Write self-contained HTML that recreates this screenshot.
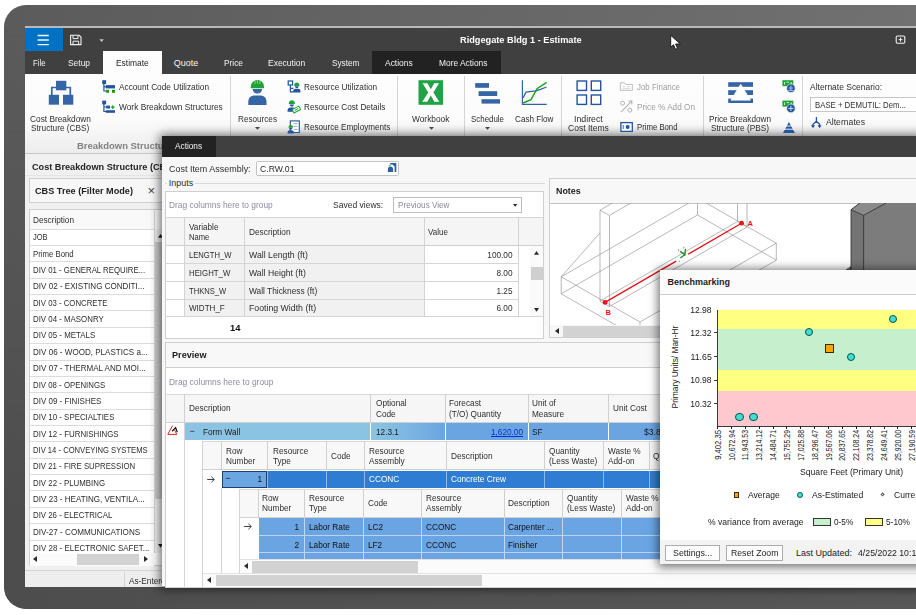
<!DOCTYPE html>
<html lang="en"><head><meta charset="utf-8"><title>Ridgegate Bldg 1 - Estimate</title>
<style>
html,body{margin:0;padding:0;background:#fff}
#root{position:relative;width:916px;height:615px;overflow:hidden;background:#fff;font-family:"Liberation Sans",sans-serif}
#root div,#root svg{position:absolute}
.t{position:absolute;white-space:nowrap;font-family:"Liberation Sans",sans-serif}
</style></head><body><div id="root">
<div style="left:4px;top:5px;width:940px;height:604px;border-radius:22px;background:linear-gradient(100deg,#5b5b5b 0%,#747474 100%)"></div><div style="left:4px;top:5px;width:940px;height:604px;border-radius:22px;background:linear-gradient(90deg,#4d4d4d 0%,#585858 100%);-webkit-mask-image:linear-gradient(180deg,rgba(0,0,0,0) 4%,#000 85%);mask-image:linear-gradient(180deg,rgba(0,0,0,0) 4%,#000 85%)"></div><div style="left:25px;top:26px;width:891px;height:561px;background:#f0f0f0;"></div><div style="left:25px;top:26px;width:891px;height:2px;background:#b9b9b9;"></div><div style="left:25px;top:28px;width:891px;height:46.3px;background:#404040;"></div><div style="left:25px;top:28px;width:37.7px;height:23.4px;background:#0072c6;"></div><div style="left:372px;top:51.3px;width:129px;height:23px;background:#222222;"></div><div style="left:103px;top:51.3px;width:59px;height:24px;background:#fdfdfd;"></div><div style="left:25px;top:74.3px;width:891px;height:79.7px;background:linear-gradient(180deg,#fdfdfd 0%,#fcfcfc 55%,#ececec 100%);"></div><div style="left:25px;top:153px;width:891px;height:1px;background:#c8c8c8;"></div><div style="left:230px;top:76px;width:1px;height:60px;background:#d4d4d4;"></div><div style="left:397px;top:76px;width:1px;height:60px;background:#d4d4d4;"></div><div style="left:464px;top:76px;width:1px;height:60px;background:#d4d4d4;"></div><div style="left:561px;top:76px;width:1px;height:60px;background:#d4d4d4;"></div><div style="left:703px;top:76px;width:1px;height:60px;background:#d4d4d4;"></div><div style="left:802px;top:76px;width:1px;height:60px;background:#d4d4d4;"></div><div style="left:25px;top:154px;width:140px;height:433px;background:#f0f0f0;"></div><div style="left:25px;top:175px;width:140px;height:1px;background:#e4e4e4;"></div><span class="t" style="top:34.25px;font-size:9px;line-height:12px;color:#ffffff;font-weight:700;left:460.4px;transform-origin:0 50%;transform:scaleX(1.0216);">Ridgegate Bldg 1 - Estimate</span><span class="t" style="top:57.25px;font-size:9px;line-height:12px;color:#f4f4f4;left:32.5px;transform-origin:0 50%;transform:scaleX(0.8611);">File</span><span class="t" style="top:57.25px;font-size:9px;line-height:12px;color:#f4f4f4;left:67.7px;transform-origin:0 50%;transform:scaleX(0.9349);">Setup</span><span class="t" style="top:57.25px;font-size:9px;line-height:12px;color:#f4f4f4;left:173.8px;transform-origin:0 50%;">Quote</span><span class="t" style="top:57.25px;font-size:9px;line-height:12px;color:#f4f4f4;left:223.5px;transform-origin:0 50%;transform:scaleX(0.9261);">Price</span><span class="t" style="top:57.25px;font-size:9px;line-height:12px;color:#f4f4f4;left:268.2px;transform-origin:0 50%;transform:scaleX(0.9410);">Execution</span><span class="t" style="top:57.25px;font-size:9px;line-height:12px;color:#f4f4f4;left:331.5px;transform-origin:0 50%;transform:scaleX(0.9162);">System</span><span class="t" style="top:57.25px;font-size:9px;line-height:12px;color:#f4f4f4;left:385.3px;transform-origin:0 50%;transform:scaleX(0.9385);">Actions</span><span class="t" style="top:57.25px;font-size:9px;line-height:12px;color:#f4f4f4;left:438.6px;transform-origin:0 50%;transform:scaleX(0.9302);">More Actions</span><span class="t" style="top:57.25px;font-size:9px;line-height:12px;color:#1e1e1e;left:115.5px;transform-origin:0 50%;transform:scaleX(0.9339);">Estimate</span><span class="t" style="top:113.25px;font-size:9px;line-height:12px;color:#2e2e2e;left:30px;transform-origin:0 50%;transform:scaleX(0.9236);">Cost Breakdown</span><span class="t" style="top:122.25px;font-size:9px;line-height:12px;color:#2e2e2e;left:30.8px;transform-origin:0 50%;transform:scaleX(0.9179);">Structure (CBS)</span><span class="t" style="top:81.25px;font-size:9px;line-height:12px;color:#2e2e2e;left:118.5px;transform-origin:0 50%;transform:scaleX(0.9178);">Account Code Utilization</span><span class="t" style="top:101.25px;font-size:9px;line-height:12px;color:#2e2e2e;left:118.5px;transform-origin:0 50%;transform:scaleX(0.9277);">Work Breakdown Structures</span><span class="t" style="top:140.25px;font-size:9px;line-height:12px;color:#828282;font-weight:700;left:77.3px;transform-origin:0 50%;transform:scaleX(1.0500);">Breakdown Structures</span><span class="t" style="top:113.25px;font-size:9px;line-height:12px;color:#2e2e2e;left:237.5px;transform-origin:0 50%;transform:scaleX(0.9063);">Resources</span><span class="t" style="top:81.25px;font-size:9px;line-height:12px;color:#2e2e2e;left:303.6px;transform-origin:0 50%;transform:scaleX(0.9145);">Resource Utilization</span><span class="t" style="top:101.25px;font-size:9px;line-height:12px;color:#2e2e2e;left:303.6px;transform-origin:0 50%;transform:scaleX(0.9090);">Resource Cost Details</span><span class="t" style="top:121.25px;font-size:9px;line-height:12px;color:#2e2e2e;left:303.6px;transform-origin:0 50%;transform:scaleX(0.9043);">Resource Employments</span><span class="t" style="top:113.25px;font-size:9px;line-height:12px;color:#2e2e2e;left:412px;transform-origin:0 50%;transform:scaleX(0.9267);">Workbook</span><span class="t" style="top:113.25px;font-size:9px;line-height:12px;color:#2e2e2e;left:471px;transform-origin:0 50%;transform:scaleX(0.8793);">Schedule</span><span class="t" style="top:113.25px;font-size:9px;line-height:12px;color:#2e2e2e;left:515px;transform-origin:0 50%;transform:scaleX(0.9055);">Cash Flow</span><span class="t" style="top:113.25px;font-size:9px;line-height:12px;color:#2e2e2e;left:574px;transform-origin:0 50%;transform:scaleX(0.9758);">Indirect</span><span class="t" style="top:122.25px;font-size:9px;line-height:12px;color:#2e2e2e;left:568px;transform-origin:0 50%;transform:scaleX(0.9485);">Cost Items</span><span class="t" style="top:81.25px;font-size:9px;line-height:12px;color:#a0a0a0;left:636.5px;transform-origin:0 50%;transform:scaleX(0.8770);">Job Finance</span><span class="t" style="top:101.25px;font-size:9px;line-height:12px;color:#a0a0a0;left:636.5px;transform-origin:0 50%;transform:scaleX(0.9127);">Price % Add On</span><span class="t" style="top:121.25px;font-size:9px;line-height:12px;color:#2e2e2e;left:636.5px;transform-origin:0 50%;transform:scaleX(0.8611);">Prime Bond</span><span class="t" style="top:113.25px;font-size:9px;line-height:12px;color:#2e2e2e;left:709.4px;transform-origin:0 50%;transform:scaleX(0.9111);">Price Breakdown</span><span class="t" style="top:122.25px;font-size:9px;line-height:12px;color:#2e2e2e;left:711px;transform-origin:0 50%;transform:scaleX(0.9202);">Structure (PBS)</span><span class="t" style="top:81.25px;font-size:9px;line-height:12px;color:#2e2e2e;left:809.6px;transform-origin:0 50%;transform:scaleX(0.9406);">Alternate Scenario:</span><div style="left:810px;top:97px;width:120px;height:15px;background:#fff;border:1px solid #c6c6c6;box-sizing:border-box"></div><span class="t" style="top:99.25px;font-size:9px;line-height:12px;color:#2e2e2e;left:815px;transform-origin:0 50%;transform:scaleX(0.8644);">BASE + DEMUTIL: Dem...</span><span class="t" style="top:116.25px;font-size:9px;line-height:12px;color:#2e2e2e;left:826px;transform-origin:0 50%;transform:scaleX(0.9622);">Alternates</span><svg style="left:254.5px;top:126.6px" width="5" height="3" viewBox="0 0 5 3"><path d="M0 0h5L2.5 2.8z" fill="#4a4a4a"/></svg><svg style="left:428.5px;top:126.6px" width="5" height="3" viewBox="0 0 5 3"><path d="M0 0h5L2.5 2.8z" fill="#4a4a4a"/></svg><svg style="left:485.2px;top:126.6px" width="5" height="3" viewBox="0 0 5 3"><path d="M0 0h5L2.5 2.8z" fill="#4a4a4a"/></svg><span class="t" style="top:161.25px;font-size:9px;line-height:12px;color:#222;font-weight:700;left:32px;transform-origin:0 50%;transform:scaleX(1.0160);">Cost Breakdown Structure (CBS)</span><div style="left:29px;top:178.4px;width:160px;height:24.8px;background:#f7f7f7;border:1px solid #d0d0d0;box-sizing:border-box"></div><span class="t" style="top:185.25px;font-size:9px;line-height:12px;color:#222;font-weight:700;left:35.2px;transform-origin:0 50%;transform:scaleX(1.0154);">CBS Tree (Filter Mode)</span><span class="t" style="top:182.25px;font-size:13px;line-height:17px;color:#444;left:147.5px;transform-origin:0 50%;">×</span><div style="left:28.5px;top:209px;width:160px;height:357px;background:#fff;border:1px solid #cfcfcf;box-sizing:border-box"></div><div style="left:29.5px;top:210px;width:124px;height:19px;background:#f9f9f9;"></div><span class="t" style="top:214.25px;font-size:9px;line-height:12px;color:#2e2e2e;left:33.4px;transform-origin:0 50%;transform:scaleX(0.9105);">Description</span><div style="left:29.5px;top:229px;width:124px;height:1px;background:#dcdcdc;"></div><span class="t" style="top:231.25px;font-size:9px;line-height:12px;color:#2e2e2e;left:33.4px;transform-origin:0 50%;transform:scaleX(0.8335);">JOB</span><div style="left:29.5px;top:245px;width:124px;height:1px;background:#dcdcdc;"></div><span class="t" style="top:248.25px;font-size:9px;line-height:12px;color:#2e2e2e;left:33.4px;transform-origin:0 50%;transform:scaleX(0.8633);">Prime Bond</span><div style="left:29.5px;top:261px;width:124px;height:1px;background:#dcdcdc;"></div><span class="t" style="top:264.25px;font-size:9px;line-height:12px;color:#2e2e2e;left:33.4px;transform-origin:0 50%;transform:scaleX(0.8684);">DIV 01 - GENERAL REQUIRE...</span><div style="left:29.5px;top:278px;width:124px;height:1px;background:#dcdcdc;"></div><span class="t" style="top:280.25px;font-size:9px;line-height:12px;color:#2e2e2e;left:33.4px;transform-origin:0 50%;transform:scaleX(0.8954);">DIV 02 - EXISTING CONDITI...</span><div style="left:29.5px;top:294px;width:124px;height:1px;background:#dcdcdc;"></div><span class="t" style="top:297.25px;font-size:9px;line-height:12px;color:#2e2e2e;left:33.4px;transform-origin:0 50%;transform:scaleX(0.8650);">DIV 03 - CONCRETE</span><div style="left:29.5px;top:310px;width:124px;height:1px;background:#dcdcdc;"></div><span class="t" style="top:313.25px;font-size:9px;line-height:12px;color:#2e2e2e;left:33.4px;transform-origin:0 50%;transform:scaleX(0.8744);">DIV 04 - MASONRY</span><div style="left:29.5px;top:327px;width:124px;height:1px;background:#dcdcdc;"></div><span class="t" style="top:329.25px;font-size:9px;line-height:12px;color:#2e2e2e;left:33.4px;transform-origin:0 50%;transform:scaleX(0.8778);">DIV 05 - METALS</span><div style="left:29.5px;top:343px;width:124px;height:1px;background:#dcdcdc;"></div><span class="t" style="top:346.25px;font-size:9px;line-height:12px;color:#2e2e2e;left:33.4px;transform-origin:0 50%;transform:scaleX(0.8951);">DIV 06 - WOOD, PLASTICS a...</span><div style="left:29.5px;top:360px;width:124px;height:1px;background:#dcdcdc;"></div><span class="t" style="top:362.25px;font-size:9px;line-height:12px;color:#2e2e2e;left:33.4px;transform-origin:0 50%;transform:scaleX(0.8942);">DIV 07 - THERMAL AND MOI...</span><div style="left:29.5px;top:376px;width:124px;height:1px;background:#dcdcdc;"></div><span class="t" style="top:379.25px;font-size:9px;line-height:12px;color:#2e2e2e;left:33.4px;transform-origin:0 50%;transform:scaleX(0.8696);">DIV 08 - OPENINGS</span><div style="left:29.5px;top:392px;width:124px;height:1px;background:#dcdcdc;"></div><span class="t" style="top:395.25px;font-size:9px;line-height:12px;color:#2e2e2e;left:33.4px;transform-origin:0 50%;transform:scaleX(0.8867);">DIV 09 - FINISHES</span><div style="left:29.5px;top:409px;width:124px;height:1px;background:#dcdcdc;"></div><span class="t" style="top:411.25px;font-size:9px;line-height:12px;color:#2e2e2e;left:33.4px;transform-origin:0 50%;transform:scaleX(0.8764);">DIV 10 - SPECIALTIES</span><div style="left:29.5px;top:425px;width:124px;height:1px;background:#dcdcdc;"></div><span class="t" style="top:428.25px;font-size:9px;line-height:12px;color:#2e2e2e;left:33.4px;transform-origin:0 50%;transform:scaleX(0.8778);">DIV 12 - FURNISHINGS</span><div style="left:29.5px;top:441px;width:124px;height:1px;background:#dcdcdc;"></div><span class="t" style="top:444.25px;font-size:9px;line-height:12px;color:#2e2e2e;left:33.4px;transform-origin:0 50%;transform:scaleX(0.8487);">DIV 14 - CONVEYING SYSTEMS</span><div style="left:29.5px;top:458px;width:124px;height:1px;background:#dcdcdc;"></div><span class="t" style="top:460.25px;font-size:9px;line-height:12px;color:#2e2e2e;left:33.4px;transform-origin:0 50%;transform:scaleX(0.8696);">DIV 21 - FIRE SUPRESSION</span><div style="left:29.5px;top:474px;width:124px;height:1px;background:#dcdcdc;"></div><span class="t" style="top:477.25px;font-size:9px;line-height:12px;color:#2e2e2e;left:33.4px;transform-origin:0 50%;transform:scaleX(0.8724);">DIV 22 - PLUMBING</span><div style="left:29.5px;top:490px;width:124px;height:1px;background:#dcdcdc;"></div><span class="t" style="top:493.25px;font-size:9px;line-height:12px;color:#2e2e2e;left:33.4px;transform-origin:0 50%;transform:scaleX(0.8953);">DIV 23 - HEATING, VENTILA...</span><div style="left:29.5px;top:507px;width:124px;height:1px;background:#dcdcdc;"></div><span class="t" style="top:509.25px;font-size:9px;line-height:12px;color:#2e2e2e;left:33.4px;transform-origin:0 50%;transform:scaleX(0.8711);">DIV 26 - ELECTRICAL</span><div style="left:29.5px;top:523px;width:124px;height:1px;background:#dcdcdc;"></div><span class="t" style="top:526.25px;font-size:9px;line-height:12px;color:#2e2e2e;left:33.4px;transform-origin:0 50%;transform:scaleX(0.9020);">DIV-27 - COMMUNICATIONS</span><div style="left:29.5px;top:540px;width:124px;height:1px;background:#dcdcdc;"></div><span class="t" style="top:542.25px;font-size:9px;line-height:12px;color:#2e2e2e;left:33.4px;transform-origin:0 50%;transform:scaleX(0.8842);">DIV 28 - ELECTRONIC SAFET...</span><div style="left:153.5px;top:210px;width:1px;height:343px;background:#d6d6d6;"></div><div style="left:154.5px;top:229px;width:8px;height:324px;background:#f4f4f4;"></div><div style="left:154.5px;top:242px;width:8px;height:256.5px;background:#cfcfcf;"></div><svg style="left:157.6px;top:234px" width="5" height="4" viewBox="0 0 5 4"><path d="M0 3.8h5L2.5 0z" fill="#222"/></svg><svg style="left:157.6px;top:544px" width="5" height="4" viewBox="0 0 5 4"><path d="M0 0h5L2.5 3.8z" fill="#222"/></svg><div style="left:29.5px;top:553px;width:124px;height:13px;background:#fbfbfb;"></div><div style="left:76.7px;top:554px;width:62px;height:11px;background:#d2d2d2;"></div><svg style="left:33px;top:556px" width="4" height="6" viewBox="0 0 4 6"><path d="M4 0v6L0 3z" fill="#2a2a2a"/></svg><svg style="left:144px;top:556px" width="4" height="6" viewBox="0 0 4 6"><path d="M0 0v6L4 3z" fill="#2a2a2a"/></svg><div style="left:25px;top:570px;width:140px;height:17px;background:#eeeeee;"></div><div style="left:25px;top:570px;width:140px;height:1px;background:#d4d4d4;"></div><div style="left:124px;top:572px;width:1px;height:15px;background:#d4d4d4;"></div><span class="t" style="top:575.25px;font-size:9px;line-height:12px;color:#2e2e2e;left:128.5px;transform-origin:0 50%;transform:scaleX(0.9150);">As-Entered</span><div style="left:162px;top:136px;width:760px;height:450px;background:#f4f4f4;box-shadow:0 1px 10px 2px rgba(0,0,0,.6)"></div><div style="left:162px;top:136px;width:760px;height:21px;background:#404040;"></div><div style="left:162px;top:136px;width:54px;height:21px;background:#222222;"></div><span class="t" style="top:140.25px;font-size:9px;line-height:12px;color:#f4f4f4;left:175.3px;transform-origin:0 50%;transform:scaleX(0.9182);">Actions</span><div style="left:162px;top:157px;width:760px;height:429px;background:#f7f7f7;"></div><span class="t" style="top:163.25px;font-size:9px;line-height:12px;color:#2e2e2e;left:168.8px;transform-origin:0 50%;transform:scaleX(0.9947);">Cost Item Assembly:</span><div style="left:256px;top:160.7px;width:143px;height:15.2px;background:#fff;border:1px solid #c4c4c4;border-radius:1.5px;box-sizing:border-box"></div><span class="t" style="top:163.25px;font-size:9px;line-height:12px;color:#2e2e2e;left:260px;transform-origin:0 50%;transform:scaleX(0.9621);">C.RW.01</span><div style="left:165px;top:183px;width:380px;height:1px;background:#d8d8d8;"></div><div style="left:167px;top:178px;width:28px;height:10px;background:#f7f7f7;"></div><span class="t" style="top:177.25px;font-size:9px;line-height:12px;color:#2e2e2e;left:168.8px;transform-origin:0 50%;">Inputs</span><div style="left:165px;top:191px;width:378.5px;height:148px;background:#fff;border:1px solid #cfcfcf;box-sizing:border-box"></div><span class="t" style="top:199.25px;font-size:9px;line-height:12px;color:#8d8da0;left:168.8px;transform-origin:0 50%;transform:scaleX(0.9295);">Drag columns here to group</span><span class="t" style="top:199.25px;font-size:9px;line-height:12px;color:#2e2e2e;left:332.6px;transform-origin:0 50%;transform:scaleX(0.9466);">Saved views:</span><div style="left:393px;top:197px;width:129px;height:16px;background:#fff;border:1px solid #bdbdbd;box-sizing:border-box"></div><span class="t" style="top:199.25px;font-size:9px;line-height:12px;color:#8a8a96;left:397.5px;transform-origin:0 50%;transform:scaleX(0.9055);">Previous View</span><svg style="left:513.4px;top:204px" width="4.4" height="3" viewBox="0 0 4.4 3"><path d="M0 0h4.4L2.2 2.8z" fill="#2a2a2a"/></svg><div style="left:166px;top:217px;width:377px;height:29px;background:#f5f5f5;"></div><div style="left:166px;top:217px;width:377px;height:1px;background:#d6d6d6;"></div><div style="left:166px;top:245px;width:377px;height:1px;background:#d0d0d0;"></div><div style="left:184px;top:217px;width:1px;height:29px;background:#d4d4d4;"></div><div style="left:244px;top:217px;width:1px;height:29px;background:#d4d4d4;"></div><div style="left:423.5px;top:217px;width:1px;height:29px;background:#d4d4d4;"></div><div style="left:517.5px;top:217px;width:1px;height:29px;background:#d4d4d4;"></div><span class="t" style="top:221.25px;font-size:9px;line-height:12px;color:#2e2e2e;left:189.3px;transform-origin:0 50%;transform:scaleX(0.9116);">Variable</span><span class="t" style="top:231.25px;font-size:9px;line-height:12px;color:#2e2e2e;left:189.3px;transform-origin:0 50%;transform:scaleX(0.8453);">Name</span><span class="t" style="top:226.25px;font-size:9px;line-height:12px;color:#2e2e2e;left:248.9px;transform-origin:0 50%;transform:scaleX(0.9216);">Description</span><span class="t" style="top:226.25px;font-size:9px;line-height:12px;color:#2e2e2e;left:428.4px;transform-origin:0 50%;transform:scaleX(0.8945);">Value</span><div style="left:185px;top:246px;width:238.5px;height:70px;background:#f1f1f1;"></div><div style="left:166px;top:263px;width:352px;height:1px;background:#d6d6d6;"></div><span class="t" style="top:249.25px;font-size:9px;line-height:12px;color:#2e2e2e;left:189px;transform-origin:0 50%;transform:scaleX(0.8477);">LENGTH_W</span><span class="t" style="top:249.25px;font-size:9px;line-height:12px;color:#2e2e2e;left:249px;transform-origin:0 50%;transform:scaleX(0.9686);">Wall Length (ft)</span><span class="t" style="top:249.25px;font-size:9px;line-height:12px;color:#2e2e2e;right:403.4px;transform-origin:100% 50%;transform:scaleX(0.9150);">100.00</span><div style="left:166px;top:281px;width:352px;height:1px;background:#d6d6d6;"></div><span class="t" style="top:267.25px;font-size:9px;line-height:12px;color:#2e2e2e;left:189px;transform-origin:0 50%;transform:scaleX(0.8692);">HEIGHT_W</span><span class="t" style="top:267.25px;font-size:9px;line-height:12px;color:#2e2e2e;left:249px;transform-origin:0 50%;transform:scaleX(0.9614);">Wall Height (ft)</span><span class="t" style="top:267.25px;font-size:9px;line-height:12px;color:#2e2e2e;right:403.4px;transform-origin:100% 50%;transform:scaleX(0.9150);">8.00</span><div style="left:166px;top:299px;width:352px;height:1px;background:#d6d6d6;"></div><span class="t" style="top:285.25px;font-size:9px;line-height:12px;color:#2e2e2e;left:189px;transform-origin:0 50%;transform:scaleX(0.8452);">THKNS_W</span><span class="t" style="top:285.25px;font-size:9px;line-height:12px;color:#2e2e2e;left:249px;transform-origin:0 50%;transform:scaleX(0.9277);">Wall Thickness (ft)</span><span class="t" style="top:285.25px;font-size:9px;line-height:12px;color:#2e2e2e;right:403.4px;transform-origin:100% 50%;transform:scaleX(0.9150);">1.25</span><div style="left:166px;top:316px;width:377px;height:1px;background:#d6d6d6;"></div><span class="t" style="top:302.25px;font-size:9px;line-height:12px;color:#2e2e2e;left:189px;transform-origin:0 50%;transform:scaleX(0.8950);">WIDTH_F</span><span class="t" style="top:302.25px;font-size:9px;line-height:12px;color:#2e2e2e;left:249px;transform-origin:0 50%;transform:scaleX(0.9720);">Footing Width (ft)</span><span class="t" style="top:302.25px;font-size:9px;line-height:12px;color:#2e2e2e;right:403.4px;transform-origin:100% 50%;transform:scaleX(0.9150);">6.00</span><div style="left:184px;top:246px;width:1px;height:70px;background:#d4d4d4;"></div><div style="left:244px;top:246px;width:1px;height:70px;background:#d4d4d4;"></div><div style="left:423.5px;top:246px;width:1px;height:70px;background:#d4d4d4;"></div><div style="left:517.5px;top:246px;width:1px;height:70px;background:#d4d4d4;"></div><div style="left:530px;top:246px;width:13px;height:70px;background:#fafafa;"></div><div style="left:530.5px;top:266.5px;width:12.5px;height:13px;background:#cfcfcf;"></div><svg style="left:534.4px;top:251.4px" width="5" height="4" viewBox="0 0 5 4"><path d="M0 3.8h5L2.5 0z" fill="#2a2a2a"/></svg><svg style="left:534.4px;top:307.6px" width="5" height="4" viewBox="0 0 5 4"><path d="M0 0h5L2.5 3.8z" fill="#2a2a2a"/></svg><span class="t" style="top:322.25px;font-size:9px;line-height:12px;color:#111;font-weight:700;left:229.9px;transform-origin:0 50%;transform:scaleX(1.0384);">14</span><div style="left:165px;top:342px;width:760px;height:246px;background:#fff;border:1px solid #cfcfcf;box-sizing:border-box"></div><div style="left:166px;top:343px;width:750px;height:24px;background:#f8f8f8;"></div><div style="left:166px;top:367px;width:750px;height:1px;background:#cfcfcf;"></div><span class="t" style="top:349.25px;font-size:9px;line-height:12px;color:#1c1c1c;font-weight:700;left:172px;transform-origin:0 50%;transform:scaleX(1.0138);">Preview</span><span class="t" style="top:376.25px;font-size:9px;line-height:12px;color:#8d8da0;left:168.5px;transform-origin:0 50%;transform:scaleX(0.9367);">Drag columns here to group</span><div style="left:166px;top:394px;width:750px;height:28px;background:#f6f6f6;"></div><div style="left:166px;top:394px;width:750px;height:1px;background:#d8d8d8;"></div><div style="left:166px;top:422px;width:750px;height:1px;background:#d0d0d0;"></div><div style="left:184px;top:394px;width:1px;height:28px;background:#d0d0d0;"></div><div style="left:370px;top:394px;width:1px;height:28px;background:#d0d0d0;"></div><div style="left:445px;top:394px;width:1px;height:28px;background:#d0d0d0;"></div><div style="left:528px;top:394px;width:1px;height:28px;background:#d0d0d0;"></div><div style="left:608px;top:394px;width:1px;height:28px;background:#d0d0d0;"></div><span class="t" style="top:402.25px;font-size:9px;line-height:12px;color:#2e2e2e;left:189.2px;transform-origin:0 50%;transform:scaleX(0.9216);">Description</span><span class="t" style="top:397.25px;font-size:9px;line-height:12px;color:#2e2e2e;left:375.7px;transform-origin:0 50%;transform:scaleX(0.9150);">Optional</span><span class="t" style="top:408.25px;font-size:9px;line-height:12px;color:#2e2e2e;left:375.7px;transform-origin:0 50%;transform:scaleX(0.9150);">Code</span><span class="t" style="top:397.25px;font-size:9px;line-height:12px;color:#2e2e2e;left:449px;transform-origin:0 50%;transform:scaleX(0.9150);">Forecast</span><span class="t" style="top:408.25px;font-size:9px;line-height:12px;color:#2e2e2e;left:449px;transform-origin:0 50%;transform:scaleX(0.9150);">(T/O) Quantity</span><span class="t" style="top:397.25px;font-size:9px;line-height:12px;color:#2e2e2e;left:532.3px;transform-origin:0 50%;transform:scaleX(0.9150);">Unit of</span><span class="t" style="top:408.25px;font-size:9px;line-height:12px;color:#2e2e2e;left:532.3px;transform-origin:0 50%;transform:scaleX(0.9150);">Measure</span><span class="t" style="top:402.25px;font-size:9px;line-height:12px;color:#2e2e2e;left:612.8px;transform-origin:0 50%;transform:scaleX(0.9150);">Unit Cost</span><div style="left:185px;top:423px;width:185px;height:17px;background:#8ac4e2;"></div><div style="left:371px;top:423px;width:74px;height:17px;background:linear-gradient(90deg,#8ac4e2 0%,#7fb8e2 45%,#6aa5e2 100%);"></div><div style="left:446px;top:423px;width:82px;height:17px;background:#6aa5e2;"></div><div style="left:529px;top:423px;width:79px;height:17px;background:#6aa5e2;"></div><div style="left:609px;top:423px;width:310px;height:17px;background:#6aa5e2;"></div><div style="left:184px;top:423px;width:1px;height:164px;background:#d4d4d4;"></div><span class="t" style="top:425.25px;font-size:9px;line-height:12px;color:#222;left:189.6px;transform-origin:0 50%;">−</span><span class="t" style="top:426.25px;font-size:9px;line-height:12px;color:#1a1a1a;left:202.6px;transform-origin:0 50%;transform:scaleX(0.9150);">Form Wall</span><span class="t" style="top:426.25px;font-size:9px;line-height:12px;color:#1a1a1a;left:376.3px;transform-origin:0 50%;transform:scaleX(0.9150);">12.3.1</span><span class="t" style="top:426.25px;font-size:9px;line-height:12px;color:#0a2fd0;right:392.6px;transform-origin:100% 50%;transform:scaleX(0.9150);text-decoration:underline;">1,620.00</span><span class="t" style="top:426.25px;font-size:9px;line-height:12px;color:#1a1a1a;left:532.3px;transform-origin:0 50%;transform:scaleX(0.9150);">SF</span><span class="t" style="top:426.25px;font-size:9px;line-height:12px;color:#1a1a1a;left:644.3px;transform-origin:0 50%;transform:scaleX(0.9500);">$3.85</span><svg style="left:166px;top:424px" width="13" height="12" viewBox="166 424 13 12"><path d="M172.5 425.6L167.8 434.4H176.8L174.6 430.2" fill="none" stroke="#e0242c" stroke-width="1"/><path d="M172.2 431.2L175.6 427.6L176.6 430.4L177.4 432.2" fill="none" stroke="#1a1a1a" stroke-width="1.3"/></svg><div style="left:202px;top:441px;width:1px;height:146px;background:#d4d4d4;"></div><div style="left:203px;top:441px;width:716px;height:29px;background:#f8f8f8;"></div><div style="left:203px;top:441px;width:716px;height:1px;background:#d8d8d8;"></div><div style="left:203px;top:469px;width:716px;height:1px;background:#d0d0d0;"></div><div style="left:221px;top:441px;width:1px;height:29px;background:#d0d0d0;"></div><div style="left:267px;top:441px;width:1px;height:29px;background:#d0d0d0;"></div><div style="left:326px;top:441px;width:1px;height:29px;background:#d0d0d0;"></div><div style="left:363.5px;top:441px;width:1px;height:29px;background:#d0d0d0;"></div><div style="left:445.5px;top:441px;width:1px;height:29px;background:#d0d0d0;"></div><div style="left:544px;top:441px;width:1px;height:29px;background:#d0d0d0;"></div><div style="left:603px;top:441px;width:1px;height:29px;background:#d0d0d0;"></div><div style="left:648.5px;top:441px;width:1px;height:29px;background:#d0d0d0;"></div><span class="t" style="top:445.25px;font-size:9px;line-height:12px;color:#2e2e2e;left:225.9px;transform-origin:0 50%;transform:scaleX(0.9150);">Row</span><span class="t" style="top:455.25px;font-size:9px;line-height:12px;color:#2e2e2e;left:225.9px;transform-origin:0 50%;transform:scaleX(0.9150);">Number</span><span class="t" style="top:445.25px;font-size:9px;line-height:12px;color:#2e2e2e;left:273px;transform-origin:0 50%;transform:scaleX(0.9150);">Resource</span><span class="t" style="top:455.25px;font-size:9px;line-height:12px;color:#2e2e2e;left:273px;transform-origin:0 50%;transform:scaleX(0.9150);">Type</span><span class="t" style="top:450.25px;font-size:9px;line-height:12px;color:#2e2e2e;left:331px;transform-origin:0 50%;transform:scaleX(0.9150);">Code</span><span class="t" style="top:445.25px;font-size:9px;line-height:12px;color:#2e2e2e;left:368.6px;transform-origin:0 50%;transform:scaleX(0.9150);">Resource</span><span class="t" style="top:455.25px;font-size:9px;line-height:12px;color:#2e2e2e;left:368.6px;transform-origin:0 50%;transform:scaleX(0.9150);">Assembly</span><span class="t" style="top:450.25px;font-size:9px;line-height:12px;color:#2e2e2e;left:450.8px;transform-origin:0 50%;transform:scaleX(0.9216);">Description</span><span class="t" style="top:445.25px;font-size:9px;line-height:12px;color:#2e2e2e;left:549px;transform-origin:0 50%;transform:scaleX(0.9150);">Quantity</span><span class="t" style="top:455.25px;font-size:9px;line-height:12px;color:#2e2e2e;left:549px;transform-origin:0 50%;transform:scaleX(0.9150);">(Less Waste)</span><span class="t" style="top:445.25px;font-size:9px;line-height:12px;color:#2e2e2e;left:608px;transform-origin:0 50%;transform:scaleX(0.9150);">Waste %</span><span class="t" style="top:455.25px;font-size:9px;line-height:12px;color:#2e2e2e;left:608px;transform-origin:0 50%;transform:scaleX(0.9150);">Add-on</span><span class="t" style="top:450.25px;font-size:9px;line-height:12px;color:#2e2e2e;left:653px;transform-origin:0 50%;transform:scaleX(0.9150);">Qty</span><div style="left:222px;top:471px;width:697px;height:17px;background:#2f7dd3;"></div><div style="left:267px;top:471px;width:1px;height:17px;background:#8fb8e6;"></div><div style="left:326px;top:471px;width:1px;height:17px;background:#8fb8e6;"></div><div style="left:363.5px;top:471px;width:1px;height:17px;background:#8fb8e6;"></div><div style="left:445.5px;top:471px;width:1px;height:17px;background:#8fb8e6;"></div><div style="left:544px;top:471px;width:1px;height:17px;background:#8fb8e6;"></div><div style="left:603px;top:471px;width:1px;height:17px;background:#8fb8e6;"></div><div style="left:648.5px;top:471px;width:1px;height:17px;background:#8fb8e6;"></div><div style="left:222px;top:471px;width:45px;height:17px;background:#6ba6e3;border:1px solid #1b3f6e;box-sizing:border-box"></div><svg style="left:207.2px;top:475.7px" width="8" height="7" viewBox="0 0 8 7"><path d="M0.2 3.5H7.2M4.4 0.8L7.3 3.5L4.4 6.2" fill="none" stroke="#2a2a2a" stroke-width="0.9"/></svg><span class="t" style="top:472.25px;font-size:9px;line-height:12px;color:#111;left:225.2px;transform-origin:0 50%;">−</span><span class="t" style="top:473.25px;font-size:9px;line-height:12px;color:#111;right:653.7px;transform-origin:100% 50%;transform:scaleX(0.9150);">1</span><span class="t" style="top:473.25px;font-size:9px;line-height:12px;color:#ffffff;left:368.6px;transform-origin:0 50%;transform:scaleX(0.9150);">CCONC</span><span class="t" style="top:473.25px;font-size:9px;line-height:12px;color:#ffffff;left:450.8px;transform-origin:0 50%;transform:scaleX(0.9150);">Concrete Crew</span><div style="left:221px;top:488px;width:1px;height:98px;background:#d4d4d4;"></div><div style="left:238.6px;top:489px;width:1px;height:84px;background:#d4d4d4;"></div><div style="left:239.6px;top:489px;width:680px;height:28px;background:#f8f8f8;"></div><div style="left:239.6px;top:489px;width:680px;height:1px;background:#d8d8d8;"></div><div style="left:239.6px;top:517px;width:680px;height:1px;background:#d0d0d0;"></div><div style="left:258px;top:489px;width:1px;height:28px;background:#d0d0d0;"></div><div style="left:304px;top:489px;width:1px;height:28px;background:#d0d0d0;"></div><div style="left:362.5px;top:489px;width:1px;height:28px;background:#d0d0d0;"></div><div style="left:420.7px;top:489px;width:1px;height:28px;background:#d0d0d0;"></div><div style="left:503.7px;top:489px;width:1px;height:28px;background:#d0d0d0;"></div><div style="left:562px;top:489px;width:1px;height:28px;background:#d0d0d0;"></div><div style="left:621px;top:489px;width:1px;height:28px;background:#d0d0d0;"></div><span class="t" style="top:492.25px;font-size:9px;line-height:12px;color:#2e2e2e;left:262.2px;transform-origin:0 50%;transform:scaleX(0.9150);">Row</span><span class="t" style="top:502.25px;font-size:9px;line-height:12px;color:#2e2e2e;left:262.2px;transform-origin:0 50%;transform:scaleX(0.9150);">Number</span><span class="t" style="top:492.25px;font-size:9px;line-height:12px;color:#2e2e2e;left:309px;transform-origin:0 50%;transform:scaleX(0.9150);">Resource</span><span class="t" style="top:502.25px;font-size:9px;line-height:12px;color:#2e2e2e;left:309px;transform-origin:0 50%;transform:scaleX(0.9150);">Type</span><span class="t" style="top:497.25px;font-size:9px;line-height:12px;color:#2e2e2e;left:367.8px;transform-origin:0 50%;transform:scaleX(0.9150);">Code</span><span class="t" style="top:492.25px;font-size:9px;line-height:12px;color:#2e2e2e;left:425.7px;transform-origin:0 50%;transform:scaleX(0.9150);">Resource</span><span class="t" style="top:502.25px;font-size:9px;line-height:12px;color:#2e2e2e;left:425.7px;transform-origin:0 50%;transform:scaleX(0.9150);">Assembly</span><span class="t" style="top:497.25px;font-size:9px;line-height:12px;color:#2e2e2e;left:508.4px;transform-origin:0 50%;transform:scaleX(0.9216);">Description</span><span class="t" style="top:492.25px;font-size:9px;line-height:12px;color:#2e2e2e;left:567px;transform-origin:0 50%;transform:scaleX(0.9150);">Quantity</span><span class="t" style="top:502.25px;font-size:9px;line-height:12px;color:#2e2e2e;left:567px;transform-origin:0 50%;transform:scaleX(0.9150);">(Less Waste)</span><span class="t" style="top:492.25px;font-size:9px;line-height:12px;color:#2e2e2e;left:626px;transform-origin:0 50%;transform:scaleX(0.9150);">Waste %</span><span class="t" style="top:502.25px;font-size:9px;line-height:12px;color:#2e2e2e;left:626px;transform-origin:0 50%;transform:scaleX(0.9150);">Add-on</span><div style="left:259px;top:518px;width:660px;height:41px;background:#6aa4e3;"></div><div style="left:259px;top:535px;width:660px;height:1px;background:#b9d3f1;"></div><span class="t" style="top:521.25px;font-size:9px;line-height:12px;color:#111;right:617px;transform-origin:100% 50%;transform:scaleX(0.9150);">1</span><span class="t" style="top:521.25px;font-size:9px;line-height:12px;color:#111;left:309px;transform-origin:0 50%;transform:scaleX(0.9150);">Labor Rate</span><span class="t" style="top:521.25px;font-size:9px;line-height:12px;color:#111;left:367.8px;transform-origin:0 50%;transform:scaleX(0.9150);">LC2</span><span class="t" style="top:521.25px;font-size:9px;line-height:12px;color:#111;left:425.7px;transform-origin:0 50%;transform:scaleX(0.9150);">CCONC</span><span class="t" style="top:521.25px;font-size:9px;line-height:12px;color:#111;left:508.4px;transform-origin:0 50%;transform:scaleX(0.9150);">Carpenter ...</span><div style="left:259px;top:552px;width:660px;height:1px;background:#b9d3f1;"></div><span class="t" style="top:539.25px;font-size:9px;line-height:12px;color:#111;right:617px;transform-origin:100% 50%;transform:scaleX(0.9150);">2</span><span class="t" style="top:539.25px;font-size:9px;line-height:12px;color:#111;left:309px;transform-origin:0 50%;transform:scaleX(0.9150);">Labor Rate</span><span class="t" style="top:539.25px;font-size:9px;line-height:12px;color:#111;left:367.8px;transform-origin:0 50%;transform:scaleX(0.9150);">LF2</span><span class="t" style="top:539.25px;font-size:9px;line-height:12px;color:#111;left:425.7px;transform-origin:0 50%;transform:scaleX(0.9150);">CCONC</span><span class="t" style="top:539.25px;font-size:9px;line-height:12px;color:#111;left:508.4px;transform-origin:0 50%;transform:scaleX(0.9150);">Finisher</span><div style="left:304px;top:518px;width:1px;height:41px;background:#c2d8f2;"></div><div style="left:362.5px;top:518px;width:1px;height:41px;background:#c2d8f2;"></div><div style="left:420.7px;top:518px;width:1px;height:41px;background:#c2d8f2;"></div><div style="left:503.7px;top:518px;width:1px;height:41px;background:#c2d8f2;"></div><div style="left:562px;top:518px;width:1px;height:41px;background:#c2d8f2;"></div><div style="left:621px;top:518px;width:1px;height:41px;background:#c2d8f2;"></div><svg style="left:243.6px;top:523.3px" width="8" height="7" viewBox="0 0 8 7"><path d="M0.2 3.5H7.2M4.4 0.8L7.3 3.5L4.4 6.2" fill="none" stroke="#2a2a2a" stroke-width="0.9"/></svg><div style="left:239.6px;top:559px;width:680px;height:14px;background:#fbfbfb;"></div><div style="left:239.6px;top:559px;width:680px;height:1px;background:#e2e2e2;"></div><div style="left:252px;top:561px;width:166px;height:11.5px;background:#d2d2d2;"></div><svg style="left:243.5px;top:563px" width="4" height="6" viewBox="0 0 4 6"><path d="M4 0v6L0 3z" fill="#2a2a2a"/></svg><div style="left:203px;top:573px;width:716px;height:13px;background:#fbfbfb;"></div><div style="left:203px;top:573px;width:716px;height:1px;background:#e2e2e2;"></div><div style="left:216px;top:574.5px;width:266px;height:11.5px;background:#d2d2d2;"></div><svg style="left:207px;top:576.5px" width="4" height="6" viewBox="0 0 4 6"><path d="M4 0v6L0 3z" fill="#2a2a2a"/></svg><div style="left:549px;top:178px;width:380px;height:160px;background:#fff;border:1px solid #cfcfcf;box-sizing:border-box"></div><div style="left:550px;top:179px;width:370px;height:24px;background:#f8f8f8;"></div><div style="left:550px;top:202.5px;width:370px;height:1px;background:#c4c4c4;"></div><span class="t" style="top:185.25px;font-size:9px;line-height:12px;color:#1c1c1c;font-weight:700;left:555.7px;transform-origin:0 50%;transform:scaleX(0.9874);">Notes</span><svg style="left:550px;top:203px" width="366" height="122" viewBox="550 203 366 122"><path d="M561.2 276.8L640.0 322.0 M640.0 322.0L776.3 243.2 M776.3 243.2L697.5 198.0 M697.5 198.0L561.2 276.8 M561.2 293.8L640.0 339.0 M640.0 339.0L776.3 260.2 M776.3 260.2L697.5 215.0 M697.5 215.0L561.2 293.8 M561.2 276.8L561.2 293.8 M640.0 322.0L640.0 339.0 M776.3 243.2L776.3 260.2 M697.5 198.0L697.5 215.0 M600.0 301.0L600.0 210.2 M609.5 306.5L609.5 215.4 M600.0 210.2L609.5 215.4 M600.0 301.0L609.5 306.5 M600.0 301.0L737.5 221.5 M609.5 306.5L747.0 227.0 M600.0 210.2L737.5 130.7 M609.5 215.4L747.0 135.9 M737.5 221.5L737.5 130.7 M747.0 227.0L747.0 135.9 M737.5 221.5L747.0 227.0 M561.2 276.8L600.0 232.9" fill="none" stroke="#9a9a9a" stroke-width="0.7"/><path d="M605.0 302.4L676.2 261.1M688.3 254.1L741.6 223.2" stroke="#e8131b" stroke-width="1.3" fill="none"/><circle cx="741.6" cy="223.2" r="2.4" fill="#e8131b"/><circle cx="605" cy="302.4" r="2.4" fill="#e8131b"/><text x="747.5" y="226.3" font-family="Liberation Sans,sans-serif" font-size="7.5" font-weight="700" fill="#e8131b">A</text><text x="605.5" y="315" font-family="Liberation Sans,sans-serif" font-size="7.5" font-weight="700" fill="#e8131b">B</text><path d="M680 251.4L685 254.6L685.4 248.8M685 254.6L680.4 258" stroke="#1f8a1f" stroke-width="1.3" fill="none"/><path d="M678.6 249.2V251M683.8 246.6V248.4M678.8 261.4H680" stroke="#555" stroke-width="0.6"/><path d="M851 209.7L859.4 203H884.7H916V325H851z" fill="#7c7c7c"/><path d="M851 209.7L863.6 215.4V325H851z" fill="#747474"/><path d="M851 209.7L859.9 203H886L863.6 215.4z" fill="#8b8b8b"/><path d="M845.8 270L851 266.6V270z" fill="#777" stroke="#333" stroke-width="0.6"/><path d="M851 325V209.7L859.9 203M851 209.7L863.6 215.4V325M863.6 215.4L886 203" stroke="#2e2e2e" stroke-width="0.8" fill="none"/></svg><div style="left:550px;top:325px;width:370px;height:12px;background:#f6f6f6;"></div><div style="left:563.3px;top:326px;width:360px;height:11px;background:#d2d2d2;"></div><svg style="left:554.5px;top:328px" width="4" height="6" viewBox="0 0 4 6"><path d="M4 0v6L0 3z" fill="#2a2a2a"/></svg><div style="left:660px;top:270px;width:270px;height:293.5px;background:#fff;box-shadow:0 1px 9px 2px rgba(0,0,0,.55)"></div><div style="left:660px;top:270px;width:270px;height:24px;background:#fbfbfb;"></div><div style="left:660px;top:293.5px;width:270px;height:1px;background:#cdcdcd;"></div><span class="t" style="top:276.25px;font-size:9px;line-height:12px;color:#1c1c1c;font-weight:700;left:667.5px;transform-origin:0 50%;">Benchmarking</span><div style="left:718px;top:309.6px;width:200px;height:116.4px;background:linear-gradient(180deg,#ffff82 0,#ffff82 19px,#c6efce 19px,#c6efce 60.2px,#ffff82 60.2px,#ffff82 81.5px,#ffc7ce 81.5px,#ffc7ce 100%);"></div><div style="left:717px;top:309.6px;width:1px;height:117px;background:#3a3a3a;"></div><div style="left:717px;top:425.6px;width:200px;height:1px;background:#3a3a3a;"></div><span class="t" style="top:304.25px;font-size:9px;line-height:12px;color:#222;right:204.6px;transform-origin:100% 50%;transform:scaleX(0.9498);">12.98</span><span class="t" style="top:327.25px;font-size:9px;line-height:12px;color:#222;right:204.6px;transform-origin:100% 50%;transform:scaleX(0.9498);">12.32</span><div style="left:714px;top:332px;width:3px;height:1px;background:#3a3a3a;"></div><span class="t" style="top:351.25px;font-size:9px;line-height:12px;color:#222;right:204.6px;transform-origin:100% 50%;transform:scaleX(0.9790);">11.65</span><div style="left:714px;top:356px;width:3px;height:1px;background:#3a3a3a;"></div><span class="t" style="top:374.25px;font-size:9px;line-height:12px;color:#222;right:204.6px;transform-origin:100% 50%;transform:scaleX(0.9498);">10.98</span><div style="left:714px;top:380px;width:3px;height:1px;background:#3a3a3a;"></div><span class="t" style="top:398.25px;font-size:9px;line-height:12px;color:#222;right:204.6px;transform-origin:100% 50%;transform:scaleX(0.9498);">10.32</span><div style="left:714px;top:403px;width:3px;height:1px;background:#3a3a3a;"></div><span class="t" style="left:675.3px;top:367.2px;font-size:9px;line-height:11px;color:#222;transform:translate(-50%,-50%) rotate(-90deg) scaleX(0.93);transform-origin:50% 50%">Primary Units/ Man-Hr</span><div style="left:735.3px;top:412.7px;width:8.4px;height:8.4px;border-radius:50%;background:#3fe0d0;border:1px solid #0d4f4f;box-sizing:border-box"></div><div style="left:749.2px;top:412.7px;width:8.4px;height:8.4px;border-radius:50%;background:#3fe0d0;border:1px solid #0d4f4f;box-sizing:border-box"></div><div style="left:805.1px;top:327.5px;width:8.4px;height:8.4px;border-radius:50%;background:#3fe0d0;border:1px solid #0d4f4f;box-sizing:border-box"></div><div style="left:847.1px;top:352.8px;width:8.4px;height:8.4px;border-radius:50%;background:#3fe0d0;border:1px solid #0d4f4f;box-sizing:border-box"></div><div style="left:889.1px;top:315.0px;width:8.4px;height:8.4px;border-radius:50%;background:#3fe0d0;border:1px solid #0d4f4f;box-sizing:border-box"></div><div style="left:825.3px;top:344.4px;width:8.8px;height:8.8px;background:#ffa500;border:1px solid #3a2a00;box-sizing:border-box"></div><div style="left:717px;top:426px;width:1px;height:3px;background:#222;"></div><span class="t" style="left:717.6px;top:430px;font-size:8.5px;line-height:10px;color:#222;transform:translate(-100%,-50%) rotate(-90deg) scaleX(0.9);transform-origin:100% 50%">9,402.35</span><div style="left:731px;top:426px;width:1px;height:3px;background:#222;"></div><span class="t" style="left:731.5px;top:430px;font-size:8.5px;line-height:10px;color:#222;transform:translate(-100%,-50%) rotate(-90deg) scaleX(0.815);transform-origin:100% 50%">10,672.94</span><div style="left:745px;top:426px;width:1px;height:3px;background:#222;"></div><span class="t" style="left:745.3px;top:430px;font-size:8.5px;line-height:10px;color:#222;transform:translate(-100%,-50%) rotate(-90deg) scaleX(0.815);transform-origin:100% 50%">11,943.53</span><div style="left:759px;top:426px;width:1px;height:3px;background:#222;"></div><span class="t" style="left:759.2px;top:430px;font-size:8.5px;line-height:10px;color:#222;transform:translate(-100%,-50%) rotate(-90deg) scaleX(0.815);transform-origin:100% 50%">13,214.12</span><div style="left:773px;top:426px;width:1px;height:3px;background:#222;"></div><span class="t" style="left:773.1px;top:430px;font-size:8.5px;line-height:10px;color:#222;transform:translate(-100%,-50%) rotate(-90deg) scaleX(0.815);transform-origin:100% 50%">14,484.71</span><div style="left:786px;top:426px;width:1px;height:3px;background:#222;"></div><span class="t" style="left:787.0px;top:430px;font-size:8.5px;line-height:10px;color:#222;transform:translate(-100%,-50%) rotate(-90deg) scaleX(0.815);transform-origin:100% 50%">15,755.29</span><div style="left:800px;top:426px;width:1px;height:3px;background:#222;"></div><span class="t" style="left:800.8px;top:430px;font-size:8.5px;line-height:10px;color:#222;transform:translate(-100%,-50%) rotate(-90deg) scaleX(0.815);transform-origin:100% 50%">17,025.88</span><div style="left:814px;top:426px;width:1px;height:3px;background:#222;"></div><span class="t" style="left:814.7px;top:430px;font-size:8.5px;line-height:10px;color:#222;transform:translate(-100%,-50%) rotate(-90deg) scaleX(0.815);transform-origin:100% 50%">18,296.47</span><div style="left:828px;top:426px;width:1px;height:3px;background:#222;"></div><span class="t" style="left:828.6px;top:430px;font-size:8.5px;line-height:10px;color:#222;transform:translate(-100%,-50%) rotate(-90deg) scaleX(0.815);transform-origin:100% 50%">19,567.06</span><div style="left:842px;top:426px;width:1px;height:3px;background:#222;"></div><span class="t" style="left:842.4px;top:430px;font-size:8.5px;line-height:10px;color:#222;transform:translate(-100%,-50%) rotate(-90deg) scaleX(0.815);transform-origin:100% 50%">20,837.65</span><div style="left:856px;top:426px;width:1px;height:3px;background:#222;"></div><span class="t" style="left:856.3px;top:430px;font-size:8.5px;line-height:10px;color:#222;transform:translate(-100%,-50%) rotate(-90deg) scaleX(0.815);transform-origin:100% 50%">22,108.24</span><div style="left:870px;top:426px;width:1px;height:3px;background:#222;"></div><span class="t" style="left:870.2px;top:430px;font-size:8.5px;line-height:10px;color:#222;transform:translate(-100%,-50%) rotate(-90deg) scaleX(0.815);transform-origin:100% 50%">23,378.82</span><div style="left:884px;top:426px;width:1px;height:3px;background:#222;"></div><span class="t" style="left:884.0px;top:430px;font-size:8.5px;line-height:10px;color:#222;transform:translate(-100%,-50%) rotate(-90deg) scaleX(0.815);transform-origin:100% 50%">24,649.41</span><div style="left:897px;top:426px;width:1px;height:3px;background:#222;"></div><span class="t" style="left:897.9px;top:430px;font-size:8.5px;line-height:10px;color:#222;transform:translate(-100%,-50%) rotate(-90deg) scaleX(0.815);transform-origin:100% 50%">25,920.00</span><div style="left:911px;top:426px;width:1px;height:3px;background:#222;"></div><span class="t" style="left:911.8px;top:430px;font-size:8.5px;line-height:10px;color:#222;transform:translate(-100%,-50%) rotate(-90deg) scaleX(0.815);transform-origin:100% 50%">27,190.59</span><span class="t" style="top:466.25px;font-size:9px;line-height:12px;color:#222;left:799.9px;transform-origin:0 50%;transform:scaleX(0.9588);">Square Feet (Primary Unit)</span><div style="left:733.6px;top:492.2px;width:5.6px;height:5.6px;background:#ffa500;border:1.2px solid #3a2a00;box-sizing:border-box"></div><span class="t" style="top:489.25px;font-size:9px;line-height:12px;color:#222;left:748.3px;transform-origin:0 50%;transform:scaleX(0.9503);">Average</span><div style="left:797.2px;top:492.2px;width:5.6px;height:5.6px;border-radius:50%;background:#3fe0d0;border:1.2px solid #0d4f4f;box-sizing:border-box"></div><span class="t" style="top:489.25px;font-size:9px;line-height:12px;color:#222;left:812px;transform-origin:0 50%;transform:scaleX(0.9565);">As-Estimated</span><div style="left:880.6px;top:493.4px;width:3.2px;height:3.2px;background:#fff;border:0.8px solid #555;box-sizing:border-box;transform:rotate(45deg)"></div><span class="t" style="top:489.25px;font-size:9px;line-height:12px;color:#222;left:894.4px;transform-origin:0 50%;transform:scaleX(0.9500);">Current</span><span class="t" style="top:516.25px;font-size:9px;line-height:12px;color:#222;left:708px;transform-origin:0 50%;transform:scaleX(0.9556);">% variance from average</span><div style="left:813px;top:518.2px;width:17.6px;height:7.7px;background:#c6efce;border:1px solid #333;box-sizing:border-box"></div><span class="t" style="top:516.25px;font-size:9px;line-height:12px;color:#222;left:834px;transform-origin:0 50%;transform:scaleX(0.9184);">0-5%</span><div style="left:865.2px;top:518.2px;width:17.8px;height:7.7px;background:#ffff82;border:1px solid #333;box-sizing:border-box"></div><span class="t" style="top:516.25px;font-size:9px;line-height:12px;color:#222;left:886px;transform-origin:0 50%;transform:scaleX(0.9225);">5-10%</span><div style="left:660px;top:539.5px;width:270px;height:24px;background:#f3f3f3;"></div><div style="left:664.5px;top:544.6px;width:55.4px;height:16.2px;background:#fdfdfd;border:1px solid #adadad;box-sizing:border-box"></div><span class="t" style="top:547.25px;font-size:9px;line-height:12px;color:#222;left:673px;transform-origin:0 50%;transform:scaleX(0.9792);">Settings...</span><div style="left:726.4px;top:544.6px;width:56.5px;height:16.2px;background:#fdfdfd;border:1px solid #adadad;box-sizing:border-box"></div><span class="t" style="top:547.25px;font-size:9px;line-height:12px;color:#222;left:731.2px;transform-origin:0 50%;transform:scaleX(0.9667);">Reset Zoom</span><span class="t" style="top:547.25px;font-size:9px;line-height:12px;color:#222;left:796px;transform-origin:0 50%;">Last Updated:</span><span class="t" style="top:547.25px;font-size:9px;line-height:12px;color:#222;left:858px;transform-origin:0 50%;transform:scaleX(0.9700);">4/25/2022 10:15 AM</span><svg style="left:36px;top:33px" width="15" height="14" viewBox="36 33 15 14"><path d="M37.6 35.5H48.8M37.6 40H48.8M37.6 44.6H48.8" stroke="#fff" stroke-width="1.3" opacity=".95"/></svg><svg style="left:68px;top:33px" width="16" height="14" viewBox="68 33 16 14"><path d="M70.6 35.3H79.2L81 37.1V44.6H70.6z" fill="none" stroke="#f2f2f2" stroke-width="1.1" stroke-linejoin="round"/><path d="M73 35.5V38.6H78V35.5M73 44.4V41.2H78.6V44.4" fill="none" stroke="#f2f2f2" stroke-width="1"/></svg><svg style="left:98px;top:38px" width="8" height="5" viewBox="98 38 8 5"><path d="M99.3 39.2H103.9L101.6 42z" fill="#c4c4c4"/></svg><svg style="left:894px;top:34px" width="13" height="11" viewBox="894 34 13 11"><rect x="896.2" y="36" width="8.6" height="7.2" rx="1.2" fill="none" stroke="#f4f4f4" stroke-width="1.1"/><path d="M900.5 37.6V41.6M898.6 39.6H902.4" stroke="#f4f4f4" stroke-width="1"/></svg><svg style="left:668px;top:33px" width="16" height="19" viewBox="668 33 16 19"><path d="M670.7 35.3V47.2L673.5 44.7L675.5 49.3L677.6 48.4L675.6 44H680.3z" fill="#fff" stroke="#111" stroke-width="0.9" stroke-linejoin="round"/></svg><svg style="left:47px;top:79px" width="28" height="27" viewBox="47 79 28 27"><rect x="56" y="80.8" width="10.3" height="9.5" fill="#3565a5"/><rect x="48.8" y="94.8" width="10.2" height="9.9" fill="#3565a5"/><rect x="63" y="94.8" width="10.3" height="9.9" fill="#3565a5"/><path d="M51.8 95V87.5H70.3V95" fill="none" stroke="#3565a5" stroke-width="1.7"/></svg><svg style="left:101px;top:79px" width="16" height="15" viewBox="101 79 16 15"><rect x="102.2" y="80.2" width="3.9" height="3.9" fill="#24549c"/><path d="M103.9 84V91H106" fill="none" stroke="#24549c" stroke-width="1.2"/><path d="M103.9 86.8H106" stroke="#24549c" stroke-width="1.2"/><rect x="105.8" y="85.1" width="9.2" height="3.3" fill="#24549c"/><rect x="106.1" y="89.8" width="2.9" height="3" fill="#12a012"/><rect x="112" y="89.8" width="3" height="3" fill="#12a012"/></svg><svg style="left:101px;top:99px" width="16" height="15" viewBox="101 99 16 15"><rect x="102.2" y="100.6" width="3.9" height="3.8" fill="#24549c"/><path d="M103.9 104V111.5H106M103.9 107H106.2" fill="none" stroke="#24549c" stroke-width="1.2"/><rect x="106.1" y="105.6" width="3.9" height="2.9" fill="#24549c"/><rect x="105.8" y="110.2" width="9.2" height="2.6" fill="#24549c"/><path d="M111 107.1H114.6M112.8 105.3V108.9" stroke="#12a012" stroke-width="1.2"/></svg><svg style="left:246px;top:79px" width="23" height="27" viewBox="246 79 23 27"><path d="M250.80 88.20H264.00V86.90C263.70 82.20 260.90 80.00 257.40 80.00C253.90 80.00 251.10 82.20 250.80 86.90z" fill="#1ea433"/><path d="M252.60 89.00H262.20C261.80 92.20 259.80 93.60 257.40 93.60C255.00 93.60 253.00 92.20 252.60 89.00z" fill="#3565a5"/><path d="M248.30 105.00V101.50C248.30 97.40 251.40 95.40 254.40 95.40H260.40C263.40 95.40 266.50 97.40 266.50 101.50V105.00z" fill="#3565a5"/><path d="M255 80.6V84M257.4 80V83.6M259.8 80.6V84" stroke="#fff" stroke-width="0.7" opacity=".7"/></svg><svg style="left:286px;top:79px" width="16" height="15" viewBox="286 79 16 15"><rect x="288.2" y="81" width="4.4" height="4" fill="none" stroke="#24549c" stroke-width="1.2"/><path d="M290.4 85V91.8H293.4M290.4 88.4H293.4" fill="none" stroke="#24549c" stroke-width="1.2"/><path d="M294.16 85.88H299.44V85.36C299.32 83.48 298.20 82.60 296.80 82.60C295.40 82.60 294.28 83.48 294.16 85.36z" fill="#1ea433"/><path d="M294.88 86.20H298.72C298.56 87.48 297.76 88.04 296.80 88.04C295.84 88.04 295.04 87.48 294.88 86.20z" fill="#24549c"/><path d="M293.16 92.60V91.20C293.16 89.56 294.40 88.76 295.60 88.76H298.00C299.20 88.76 300.44 89.56 300.44 91.20V92.60z" fill="#24549c"/></svg><svg style="left:286px;top:99px" width="16" height="15" viewBox="286 99 16 15"><path d="M288.76 104.07H294.84V103.47C294.70 101.31 293.41 100.30 291.80 100.30C290.19 100.30 288.90 101.31 288.76 103.47z" fill="#1ea433"/><path d="M289.59 104.44H294.01C293.82 105.91 292.90 106.56 291.80 106.56C290.70 106.56 289.78 105.91 289.59 104.44z" fill="#24549c"/><path d="M287.61 111.80V110.19C287.61 108.30 289.04 107.38 290.42 107.38H293.18C294.56 107.38 295.99 108.30 295.99 110.19V111.80z" fill="#24549c"/><g transform="rotate(-28 296.5 109.5)"><rect x="292.6" y="107.6" width="7.6" height="3.8" fill="#fff" stroke="#1ea433" stroke-width="1"/><path d="M294.4 109.5H298.4" stroke="#1ea433" stroke-width="0.9"/></g></svg><svg style="left:286px;top:119px" width="16" height="15" viewBox="286 119 16 15"><rect x="290.3" y="120.9" width="9" height="11.6" fill="#fff" stroke="#24549c" stroke-width="1.1"/><path d="M293.6 123.6H297.4M293.6 126.4H297.4M293.6 129.4H297.4" stroke="#8aa6cc" stroke-width="0.9"/><path d="M288.56 127.79H293.04V127.35C292.94 125.75 291.99 125.00 290.80 125.00C289.61 125.00 288.66 125.75 288.56 127.35z" fill="#1ea433"/><path d="M289.17 128.06H292.43C292.30 129.15 291.62 129.62 290.80 129.62C289.98 129.62 289.30 129.15 289.17 128.06z" fill="#24549c"/><path d="M287.71 133.50V132.31C287.71 130.92 288.76 130.24 289.78 130.24H291.82C292.84 130.24 293.89 130.92 293.89 132.31V133.50z" fill="#24549c"/></svg><svg style="left:418px;top:80px" width="26" height="26" viewBox="418 80 26 26"><rect x="418.5" y="80.2" width="24.5" height="24.6" fill="#21a345"/><path d="M422.6 83.2H427.4L430.8 89.3L434.2 83.2H439L433.4 92.5L439.2 101.8H434.3L430.8 95.6L427.3 101.8H422.4L428.2 92.5z" fill="#fff"/></svg><svg style="left:474px;top:82px" width="27" height="23" viewBox="474 82 27 23"><rect x="475.2" y="83.1" width="13.8" height="4.7" fill="#3565a5"/><rect x="478.6" y="91.2" width="18.6" height="4.8" fill="#3565a5"/><rect x="481.5" y="99.2" width="18.5" height="4.4" fill="#3565a5"/></svg><svg style="left:521px;top:79px" width="27" height="27" viewBox="521 79 27 27"><path d="M522.4 80.2V104.3H546.8" fill="none" stroke="#3565a5" stroke-width="1.2"/><path d="M523 98L526 92.2L536 90.9L540.4 89.4L546.6 87" fill="none" stroke="#3565a5" stroke-width="1.3"/><path d="M523.2 103L531 99.7L537 88.7L546.6 82.4" fill="none" stroke="#17a317" stroke-width="1.4"/></svg><svg style="left:575px;top:79px" width="28" height="27" viewBox="575 79 28 27"><rect x="577.1" y="81" width="9.4" height="9.4" fill="#fff" stroke="#24549c" stroke-width="1.4"/><rect x="577.1" y="95" width="9.4" height="9.4" fill="#fff" stroke="#24549c" stroke-width="1.4"/><rect x="591.3" y="81" width="9.4" height="9.4" fill="#fff" stroke="#24549c" stroke-width="1.4"/><rect x="591.3" y="95" width="9.4" height="9.4" fill="#fff" stroke="#24549c" stroke-width="1.4"/></svg><svg style="left:619px;top:81px" width="15" height="11" viewBox="619 81 15 11"><path d="M620.3 90.3V82.8H624.4L625.6 84.4H632.3V90.3z" fill="none" stroke="#bcbcbc" stroke-width="1"/><path d="M622.6 86.6H625M627 86.6H630M622.6 88.4H630" stroke="#cfcfcf" stroke-width="0.8"/></svg><svg style="left:619px;top:99px" width="15" height="15" viewBox="619 99 15 15"><path d="M621 112.2L631.6 101.2M628.4 101H631.8V104.4" fill="none" stroke="#b4b4b4" stroke-width="1.1"/><circle cx="622.6" cy="103.2" r="2" fill="none" stroke="#b4b4b4" stroke-width="1"/><circle cx="629.8" cy="110.2" r="2" fill="none" stroke="#b4b4b4" stroke-width="1"/></svg><svg style="left:619px;top:121px" width="15" height="12" viewBox="619 121 15 12"><rect x="620.9" y="122.6" width="11.4" height="8.8" fill="#fff" stroke="#24549c" stroke-width="1.3"/><circle cx="627.6" cy="127" r="2" fill="#24549c"/><path d="M623.2 125V129" stroke="#24549c" stroke-width="0.9"/></svg><svg style="left:727px;top:81px" width="27" height="23" viewBox="727 81 27 23"><rect x="728.2" y="82.2" width="24.8" height="4.6" fill="#3565a5"/><rect x="728.2" y="90.2" width="24.8" height="4.8" fill="#3565a5"/><rect x="728.2" y="98.6" width="24.8" height="4.4" fill="#3565a5"/><path d="M740.7 84.4L750.4 100.1H731z" fill="#fff" stroke="#fff" stroke-width="0.9" stroke-linejoin="round"/></svg><svg style="left:781px;top:79px" width="16" height="15" viewBox="781 79 16 15"><rect x="782.4" y="80.2" width="10.9" height="6" fill="#1ea433"/><path d="M784.6 82V84.6M786.6 82.2H789M791.2 82V84.6" stroke="#fff" stroke-width="0.8"/><circle cx="790.9" cy="88.2" r="4.3" fill="#24549c" stroke="#fff" stroke-width="0.6"/><path d="M790.9 85.4V90.6M788.4 90.4H793.4M788.6 88H793.2" stroke="#dfe8f5" stroke-width="0.7"/></svg><svg style="left:781px;top:99px" width="16" height="15" viewBox="781 99 16 15"><rect x="782.4" y="100.6" width="10.9" height="6" fill="#1ea433"/><path d="M784.6 102.4V105M786.6 102.6H789M791.2 102.4V105" stroke="#fff" stroke-width="0.8"/><circle cx="790.9" cy="108.4" r="4.3" fill="#24549c" stroke="#fff" stroke-width="0.6"/><path d="M790.9 105.8V111M788.3 108.4H793.5" stroke="#dfe8f5" stroke-width="0.9"/></svg><svg style="left:782px;top:121px" width="14" height="13" viewBox="782 121 14 13"><path d="M788.9 122L795 133H783z" fill="#24549c"/><path d="M785 126H793M784 129.2H794" stroke="#fff" stroke-width="0.9"/></svg><svg style="left:810px;top:116px" width="13" height="13" viewBox="810 116 13 13"><path d="M816.4 117V121.2L813 124.2V127M816.4 121.2L819.6 124.2V127" fill="none" stroke="#24549c" stroke-width="1.3"/><path d="M811 125.2H815L813 128.3zM817.6 125.2H821.6L819.6 128.3z" fill="#24549c"/></svg><svg style="left:387px;top:162px" width="11" height="12" viewBox="387 162 11 12"><path d="M387.9 172V169.4C387.9 167.6 389.2 166.6 390.5 166.6C391.9 166.6 393.1 167.6 393.1 169.4V172z" fill="#2c5fa2"/><path d="M390.2 163H396.3V172H394.6V166.6L392.4 164.6H390.2z" fill="#2c5fa2"/><rect x="388.8" y="164.8" width="2" height="1.6" fill="#5fd06a"/></svg>
</div></body></html>
